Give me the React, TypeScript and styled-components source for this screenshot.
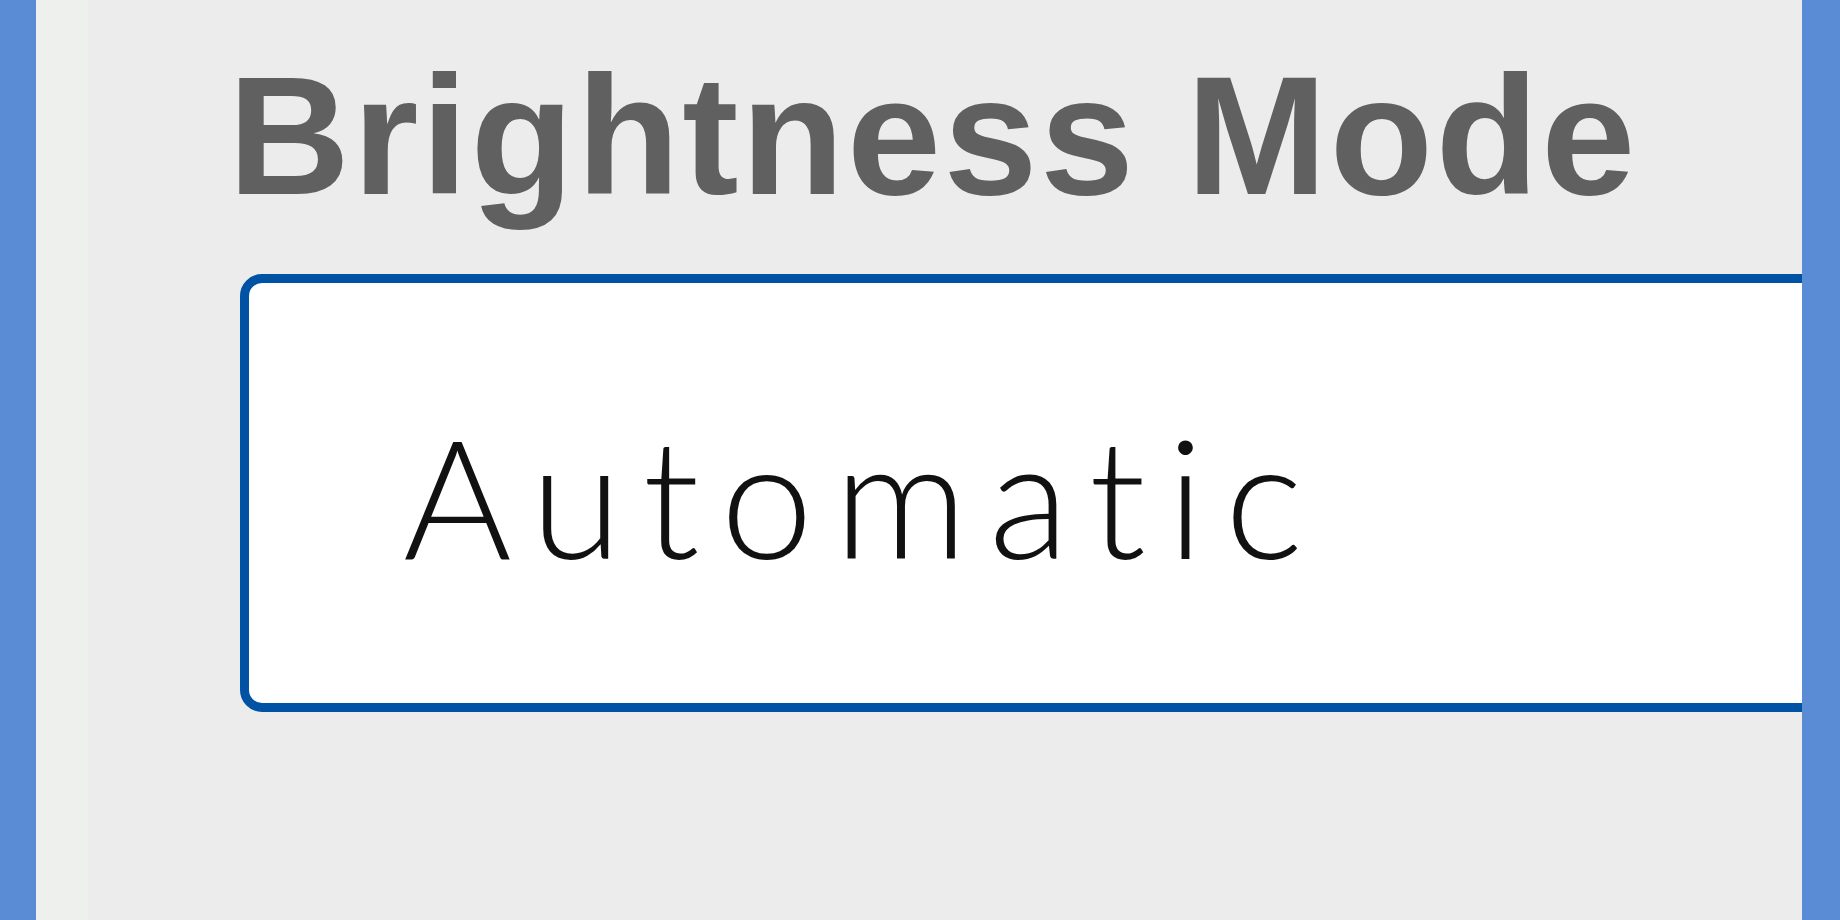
import styled, { createGlobalStyle } from 'styled-components';

const GlobalStyle = createGlobalStyle`
  html, body {
    margin: 0;
    padding: 0;
    background: #ececec;
  }
`

const Frame = styled.div`
  width: 1840px;
  height: 920px;
  box-sizing: border-box;
  border-left: 36px solid #5a8cd6;
  border-right: 38px solid #5a8cd6;
  background: linear-gradient(90deg, #eef0ee 0px, #eef0ee 52px, #ececec 52px);
  overflow: hidden;
  display: flex;
  flex-direction: column;
  padding: 51px 0 0 204px;
`

const FieldLabel = styled.label`
  margin-left: -12px;
  font-family: "Liberation Sans", Arial, sans-serif;
  font-weight: 700;
  font-size: 169px;
  line-height: 1;
  letter-spacing: 2.6px;
  color: #606060;
  white-space: nowrap;
`

// only the left part of the select is in view, the rest runs under the right edge
const SelectFace = styled.div`
  margin-top: 54px;
  width: calc(100% + 60px);
  height: 438px;
  box-sizing: border-box;
  flex-shrink: 0;
  border: 9px solid #0053a4;
  border-radius: 22px;
  background: #ffffff;
  padding: 129px 0 0 154px;
  font-family: Lato, "Open Sans", sans-serif;
  font-weight: 300;
  font-size: 166px;
  line-height: 1;
  letter-spacing: 21px;
  color: #111111;
  white-space: nowrap;
`

export default function App() {
  return (
    <>
      <GlobalStyle />
      <Frame>
        <FieldLabel>Brightness Mode</FieldLabel>
        <SelectFace role="combobox">Automatic</SelectFace>
      </Frame>
    </>
  );
}
